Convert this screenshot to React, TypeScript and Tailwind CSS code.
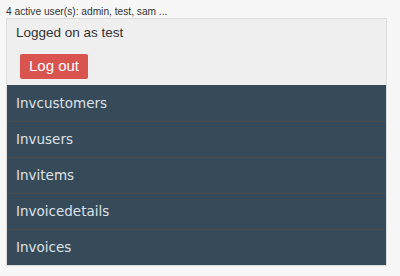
export default function App() {
  const items = ["Invcustomers", "Invusers", "Invitems", "Invoicedetails", "Invoices"]

  return (
    <div className="min-h-[276px] bg-[#f7f7f7] px-[6px] pt-[5px] font-['DejaVu_Sans',Verdana,sans-serif]">
      <div className="h-[13px] font-['Liberation_Sans',Arial,sans-serif] text-[10.2px] leading-[13px] text-[#333]">
        4 active user(s): admin, test, sam ...
      </div>
      <div className="w-[381px] border border-[#dddddd]">
        <div className="h-[66px] bg-[#efefef] px-[9px] pt-[5px] font-['Liberation_Sans',Arial,sans-serif]">
          <div className="text-[13.5px] leading-[18px] text-[#333]">Logged on as test</div>
          <button
            type="button"
            className="mt-[12px] ml-[4px] flex h-[25px] w-[68px] items-center justify-center rounded-[2px] bg-[#d9534f] text-[15px] text-white"
          >
            Log out
          </button>
        </div>
        <div className="bg-[#374a59]">
          {items.map((item, i) => (
            <div
              key={item}
              className={`flex h-[36px] items-center px-[9px] text-[13.5px] text-[#dde2e6] ${
                i > 0 ? "border-t border-[#4f4b48]" : ""
              }`}
            >
              {item}
            </div>
          ))}
        </div>
      </div>
    </div>
  )
}
